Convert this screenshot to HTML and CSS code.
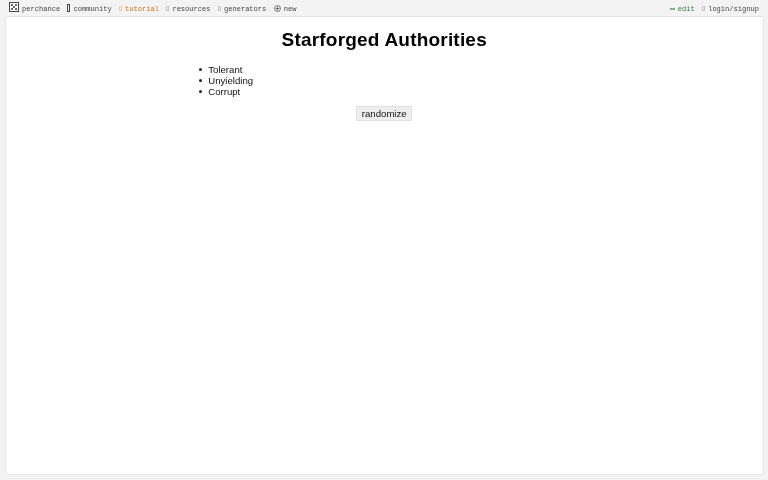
FILE: index.html
```html
<!DOCTYPE html>
<html lang="en">
<head>
<meta charset="utf-8">
<title>Starforged Authorities</title>
<link rel="stylesheet" href="styles.css">
</head>
<body>
<nav class="topbar">
  <div class="nav-group">
    <a class="nav-item nav-logo">
      <svg class="dice" viewBox="0 0 10 10" width="10" height="10" aria-hidden="true">
        <rect x="0.5" y="0.5" width="9" height="9" fill="#fff" stroke="#444"/>
        <rect x="2" y="2" width="2" height="2" fill="#666"/>
        <rect x="6" y="2" width="2" height="2" fill="#666"/>
        <rect x="4" y="4" width="2" height="2" fill="#666"/>
        <rect x="2" y="6" width="2" height="2" fill="#666"/>
        <rect x="6" y="6" width="2" height="2" fill="#666"/>
      </svg>
      <span>perchance</span>
    </a>
    <a class="nav-item"><span class="tofu tofu-tall"></span><span>community</span></a>
    <a class="nav-item nav-orange"><span class="tofu"></span><span>tutorial</span></a>
    <a class="nav-item"><span class="tofu"></span><span>resources</span></a>
    <a class="nav-item"><span class="tofu"></span><span>generators</span></a>
    <a class="nav-item">
      <svg class="globe" viewBox="0 0 8 8" width="7" height="7" aria-hidden="true">
        <circle cx="4" cy="4" r="3.4" fill="none" stroke="#444" stroke-width="0.8"/>
        <path d="M4 1.8V6.2M1.8 4H6.2" stroke="#444" stroke-width="0.8"/>
      </svg>
      <span>new</span>
    </a>
  </div>
  <div class="nav-group">
    <a class="nav-item nav-green"><span class="pencil"></span><span>edit</span></a>
    <a class="nav-item"><span class="tofu"></span><span>login/signup</span></a>
  </div>
</nav>
<main class="card">
  <h1 class="title">Starforged Authorities</h1>
  <ul class="results">
    <li>Tolerant</li>
    <li>Unyielding</li>
    <li>Corrupt</li>
  </ul>
  <div class="actions"><button class="randomize" type="button">randomize</button></div>
</main>
</body>
</html>
```
FILE: styles.css
```css
* { box-sizing: border-box; }
html, body { height: 100%; }
body {
  margin: 0;
  display: flex;
  flex-direction: column;
  background: #f3f3f3;
  color: #000;
  font-family: "Liberation Sans", Arial, sans-serif;
}
.topbar {
  display: flex;
  justify-content: space-between;
  align-items: center;
  height: 16px;
  padding: 1px 9px 0 9px;
  font-family: "Liberation Mono", monospace;
  font-size: 7.07px;
  color: #444;
  will-change: transform;
}
.nav-group { display: flex; align-items: center; gap: 7.4px; }
.nav-item { display: flex; align-items: center; gap: 3px; white-space: nowrap; }
.nav-logo { gap: 3px; margin-right: -1px; }
.nav-orange { color: #d9701c; }
.nav-green { color: #2f7d32; gap: 3px; }
.tofu { width: 3px; height: 5px; border: 1px solid #c4c4c4; }
.nav-orange .tofu { border-color: #f0c8a4; }
.tofu-tall { height: 8px; border-color: #444; margin-right: 1px; margin-top: -2px; }
.pencil { width: 5px; height: 2px; background: #7cb87e; }
.dice, .globe { display: block; }
.dice { margin-top: -3px; }
.card {
  flex: 1;
  margin: 0 5px 5px 4.5px;
  background: #fff;
  border: 1px solid #e4e4e4;
  border-radius: 2px;
  padding: 0;
  will-change: transform;
}
.title {
  margin: 12px 0 0;
  text-align: center;
  font-size: 19px;
  line-height: 22px;
  font-weight: 700;
  letter-spacing: 0.2px;
  color: #000;
}
.results {
  width: 384px;
  margin: 13px auto 0;
  padding: 0 0 0 7px;
  list-style: none;
  font-size: 9.6px;
  line-height: 11px;
  color: #111;
}
.results li { display: flex; align-items: center; gap: 6px; }
.results li::before {
  content: "";
  width: 3px;
  height: 3px;
  border-radius: 50%;
  background: #222;
}
.actions { display: flex; justify-content: center; margin-top: 9px; }
.randomize {
  width: 56px;
  height: 15px;
  padding: 0;
  font-family: "Liberation Sans", Arial, sans-serif;
  font-size: 9.6px;
  line-height: 13px;
  color: #111;
  background: #eee;
  border: 1px solid #e0e0e0;
  border-radius: 1px;
}
```
